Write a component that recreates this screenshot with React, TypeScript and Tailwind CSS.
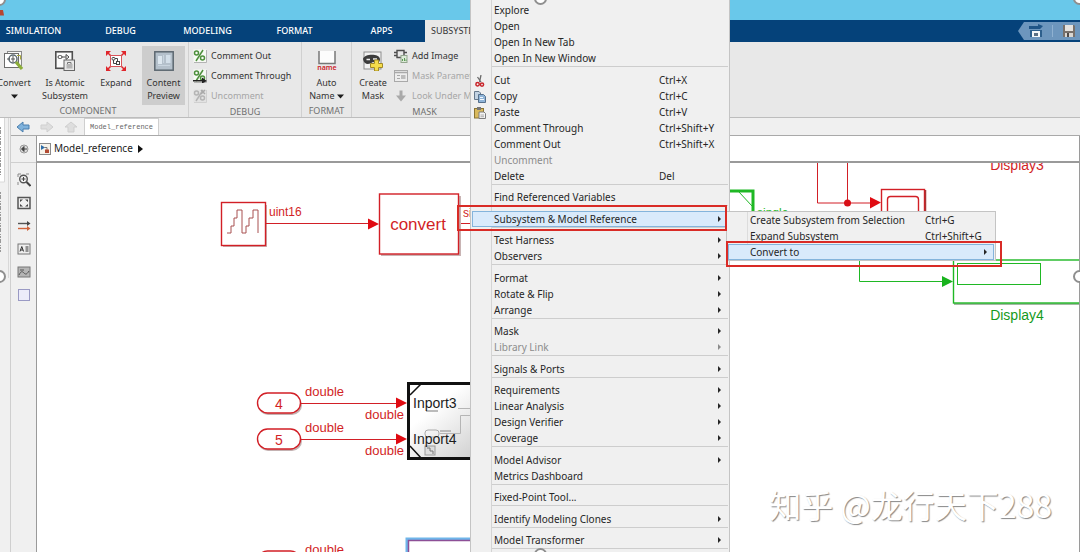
import React from 'react';
import { clsx } from 'clsx';

interface MenuEntry {
  label: string;
  shortcut?: string;
  submenu?: boolean;
  disabled?: boolean;
  active?: boolean;
  icon?: React.ReactNode;
}

const CutIcon = () => (
  <svg className="h-3 w-3" viewBox="0 0 12 12" fill="none">
    <path d="M7 0 5.5 7M3.5 2 7 7" stroke="#6b6b6b" strokeWidth="1.3" />
    <circle cx="3.6" cy="9.2" r="1.7" stroke="#c9252b" strokeWidth="1.5" />
    <circle cx="8" cy="9.6" r="1.6" stroke="#c9252b" strokeWidth="1.5" />
  </svg>
);

const CopyIcon = () => (
  <svg className="h-3 w-3" viewBox="0 0 12 12">
    <path d="M.5.5h4.5l1.5 1.500v6.500h-6z" fill="#c3d3e3" stroke="#66788c" />
    <path d="M4.500 3.500h5l2 2v6h-7z" fill="#8fb4d8" stroke="#56708c" />
    <path d="M6 6.500h3M6 8.500h4" stroke="#f2f7fc" />
  </svg>
);

const PasteIcon = () => (
  <svg className="h-3 w-3" viewBox="0 0 12 12">
    <rect x=".5" y="1.500" width="9" height="9.500" fill="#d9b95c" stroke="#8a7434" />
    <rect x="3" y="0" width="4" height="3" fill="#777" />
    <path d="M5 5h5l1.500 1.500v5h-6.500z" fill="#f4f4f4" stroke="#7d7d7d" />
    <path d="M6.500 8h3.500M6.500 9.700h3.500" stroke="#9a9a9a" strokeWidth=".8" />
  </svg>
);

const menuGroups: MenuEntry[][] = [
  [{ label: 'Explore' }, { label: 'Open' }, { label: 'Open In New Tab' }, { label: 'Open In New Window' }],
  [
    { label: 'Cut', shortcut: 'Ctrl+X', icon: <CutIcon /> },
    { label: 'Copy', shortcut: 'Ctrl+C', icon: <CopyIcon /> },
    { label: 'Paste', shortcut: 'Ctrl+V', icon: <PasteIcon /> },
    { label: 'Comment Through', shortcut: 'Ctrl+Shift+Y' },
    { label: 'Comment Out', shortcut: 'Ctrl+Shift+X' },
    { label: 'Uncomment', disabled: true },
    { label: 'Delete', shortcut: 'Del' },
  ],
  [{ label: 'Find Referenced Variables' }],
  [{ label: 'Subsystem & Model Reference', submenu: true, active: true }],
  [{ label: 'Test Harness', submenu: true }, { label: 'Observers', submenu: true }],
  [
    { label: 'Format', submenu: true },
    { label: 'Rotate & Flip', submenu: true },
    { label: 'Arrange', submenu: true },
  ],
  [{ label: 'Mask', submenu: true }, { label: 'Library Link', submenu: true, disabled: true }],
  [{ label: 'Signals & Ports', submenu: true }],
  [
    { label: 'Requirements', submenu: true },
    { label: 'Linear Analysis', submenu: true },
    { label: 'Design Verifier', submenu: true },
    { label: 'Coverage', submenu: true },
  ],
  [{ label: 'Model Advisor', submenu: true }, { label: 'Metrics Dashboard' }],
  [{ label: 'Fixed-Point Tool...' }],
  [{ label: 'Identify Modeling Clones', submenu: true }],
  [{ label: 'Model Transformer', submenu: true }],
];

const submenuEntries: MenuEntry[] = [
  { label: 'Create Subsystem from Selection', shortcut: 'Ctrl+G' },
  { label: 'Expand Subsystem', shortcut: 'Ctrl+Shift+G' },
  { label: 'Convert to', submenu: true, active: true },
];

const MenuRow = ({ entry }: { entry: MenuEntry }) => (
  <button
    type="button"
    role="menuitem"
    disabled={entry.disabled}
    className={clsx(
      'relative flex h-4 w-full items-center pl-[22px] pr-[7px] text-left text-[10px] leading-4 whitespace-nowrap',
      entry.disabled ? 'text-[#8c8c8c]' : 'text-[#262626]',
      entry.active && 'bg-[#d9eafb] outline outline-1 -outline-offset-1 outline-[#84b4dc]'
    )}
  >
    {entry.icon && <span className="absolute left-[2px] top-[3px]">{entry.icon}</span>}
    <span className="flex-1">{entry.label}</span>
    {entry.shortcut && <span className="w-[62px]">{entry.shortcut}</span>}
    {entry.submenu && (
      <svg className="h-[6px] w-[3px]" viewBox="0 0 3 6" fill="currentColor">
        <path d="M0 0 3 3 0 6z" />
      </svg>
    )}
  </button>
);

/* Right-click menu */
const ContextMenu = () => (
  <div role="menu" className="absolute -top-[2px] bottom-0 left-[470px] w-[260px] border-x border-[#c4c4c4] bg-[#f0f0f0]">
    <div className="absolute inset-y-0 left-5 w-px bg-[#d4d4d4]" />
    {menuGroups.map((group, i) => (
      <div key={i} className="relative px-px pt-[5px] first:pt-px even:pt-1">
        {group.map((entry) => (
          <MenuRow key={entry.label} entry={entry} />
        ))}
        <div className="ml-5 h-px bg-[#cdcdcd]" />
      </div>
    ))}
  </div>
);

const Submenu = () => (
  <div role="menu" className="absolute left-[726px] top-[211px] w-[270px] border border-[#c4c4c4] bg-[#f0f0f0] px-px">
    <div className="absolute inset-y-0 left-5 w-px bg-[#dcdcdc]" />
    {submenuEntries.map((entry) => (
      <MenuRow key={entry.label} entry={entry} />
    ))}
  </div>
);

/* Ribbon icons */
const ConvertIcon = () => (
  <svg className="h-5 w-5" viewBox="0 0 20 20" fill="none">
    <rect x="3.500" y=".5" width="14" height="14" fill="#f7f7f7" stroke="#8a8a8a" />
    <rect x=".5" y="2.500" width="14" height="14" fill="#fff" stroke="#6d6d6d" />
    <circle cx="9" cy="8" r="4" stroke="#5d6a72" strokeWidth="1.500" />
    <path d="M3 8h3M9 5v6M7 8h4" stroke="#555" />
    <path d="m12 11 6 7" stroke="#8cae3a" strokeWidth="3.200" />
    <path d="M13 4.500h3.500v4" stroke="#a6a63c" />
  </svg>
);

const AtomicIcon = () => (
  <svg className="h-5 w-5" viewBox="0 0 20 20" fill="none">
    <rect x=".8" y=".8" width="16.500" height="16.500" fill="#fbfbfb" stroke="#4f4f4f" strokeWidth="1.600" />
    <rect x="3" y="4.500" width="4" height="3" rx="1.500" stroke="#444" />
    <path d="M7 6h3.500M11 3.500 14 6l-3 2.500z" stroke="#444" />
    <rect x="9" y="9" width="10.500" height="10.500" fill="#e9e9e9" stroke="#666" />
    <rect x="11.500" y="13" width="6" height="4.500" fill="#b5b5b5" />
    <path d="M12.500 13v-1.500h3.500V13" stroke="#777" />
  </svg>
);

const ExpandIcon = () => (
  <svg className="h-5 w-5" viewBox="0 0 20 20" fill="none">
    <path d="M0 0h5L0 5zM20 0v5l-5-5zM0 20v-5l5 5zM20 20h-5l5-5z" fill="#e0262c" />
    <path d="m1 1 4 4M19 1l-4 4M1 19l4-4M19 19l-4-4" stroke="#e0262c" strokeWidth="1.500" />
    <rect x="4.500" y="4.500" width="11" height="11" fill="#fff" stroke="#d8545a" />
    <rect x="6" y="6.500" width="3" height="2.500" rx="1" stroke="#444" />
    <path d="M9 7.500h2.500v3M7.500 9v3.500h3" stroke="#444" />
    <rect x="10.500" y="10.500" width="3" height="3" stroke="#444" />
  </svg>
);

const PreviewIcon = () => (
  <svg className="h-5 w-5" viewBox="0 0 20 20" fill="none">
    <rect x=".8" y=".8" width="18.400" height="18.400" fill="#b4c0cb" stroke="#5c6770" strokeWidth="1.500" />
    <rect x="4" y="5" width="4" height="8" fill="#dde7ef" />
    <rect x="12" y="4" width="4.500" height="8" fill="#d3dfe9" />
    <path d="M4 14.500h12M9.500 4v8" stroke="#c9d5df" />
  </svg>
);

const NameIcon = () => (
  <svg className="h-5 w-5 overflow-visible" viewBox="0 0 20 20" fill="none">
    <rect x="2" y="0" width="16" height="12" fill="#fcfcfc" />
    <path d="M2 0v12.500h16V0" stroke="#777" strokeWidth="1.500" />
    <text x="10" y="19" textAnchor="middle" fill="#cc2229" fontSize="7" fontWeight="600">
      name
    </text>
  </svg>
);

const MaskIcon = () => (
  <svg className="h-5 w-5" viewBox="0 0 20 20" fill="none">
    <rect x="1" y="1" width="17" height="17" fill="#f2f2f2" stroke="#8d8d8d" />
    <path d="M0 8c1-5 16-6 17 0 0 4-3 5-7 3-4 3-9 3-10-3z" fill="#3c3c3c" />
    <path d="M3.500 8.500h3.500M10 8h4" stroke="#eee" strokeWidth="1.600" />
    <path d="M11.500 9h4v3.500h4v4h-4V20h-4v-3.500h-4v-4h4z" fill="#f6dd4b" stroke="#a28a26" />
  </svg>
);

const PercentIcon = ({ variant }: { variant: 'out' | 'through' | 'none' }) => (
  <svg className="h-[14px] w-[14px]" viewBox="0 0 14 14" fill="none">
    <rect x=".5" y=".5" width="13" height="13" fill={variant === 'none' ? '#e2e2e2' : '#f6faf3'} />
    <path d="M13.500 1v12.500H1" stroke={variant === 'none' ? '#d0d0d0' : '#b3b3b3'} />
    <g stroke={variant === 'none' ? '#b4b4b4' : '#4d8f3c'} strokeWidth="1.500">
      <circle cx="3.500" cy="4" r="2" />
      <circle cx="9.500" cy="9" r="2" />
      <path d="M10 1 3 12" />
    </g>
    {variant === 'through' && <path d="M0 11h9V8.500l5 3.500-5 2.500v-2H0z" fill="#222" />}
    {variant === 'none' && <path d="m8 1 4 4M12 1 8 5" stroke="#aaa" strokeWidth="1.500" />}
  </svg>
);

const AddImageIcon = () => (
  <svg className="h-[14px] w-[14px]" viewBox="0 0 14 14" fill="none">
    <path d="M3 1.500h7v7H3zM0 3.500h3M0 6.500h3M10 3.500h3" stroke="#4d4d4d" strokeWidth="1.400" />
    <rect x="7" y="6.500" width="6" height="7" fill="#dcebd8" stroke="#93a58e" />
    <path d="M8.500 12v-2M10.500 12V9M12 12v-1.500" stroke="#5d9a56" />
  </svg>
);

const ParamsIcon = () => (
  <svg className="h-[14px] w-[14px]" viewBox="0 0 14 14" fill="none">
    <rect x=".5" y="1.500" width="13" height="11" fill="#ededed" stroke="#a9a9a9" />
    <path d="M1 3.500h12" stroke="#a9a9a9" strokeWidth="1.500" />
    <path d="M3 6.500h3M3 9.500h3" stroke="#a9a9a9" />
    <rect x="7" y="6" width="4.500" height="4" fill="#bcbcbc" />
  </svg>
);

const LookUnderIcon = () => (
  <svg className="h-[14px] w-[14px]" viewBox="0 0 14 14">
    <path d="M5.500 1.500h3v5H12L7 12.500 2 6.500h3.500z" fill="#a9a9a9" />
  </svg>
);

const DownCaret = () => (
  <svg className="inline h-[5px] w-[7px]" viewBox="0 0 7 5">
    <path d="M0 .5h7L3.500 4.500z" fill="#1c1c1c" />
  </svg>
);

interface ToolButtonProps {
  icon: React.ReactNode;
  children: React.ReactNode;
  className?: string;
}

const ToolButton = ({ icon, children, className }: ToolButtonProps) => (
  <button
    type="button"
    className={clsx('flex h-[59px] flex-col items-center gap-[5px] pt-[5px] text-center leading-[13px] whitespace-nowrap', className)}
  >
    {icon}
    <span>{children}</span>
  </button>
);

const SmallButton = ({ icon, label, disabled }: { icon: React.ReactNode; label: string; disabled?: boolean }) => (
  <button
    type="button"
    disabled={disabled}
    className={clsx('flex h-5 items-center gap-1 whitespace-nowrap', disabled && 'text-[#a6a6a6]')}
  >
    {icon}
    {label}
  </button>
);

const RibbonGroup = ({ title, className, children }: { title: string; className?: string; children: React.ReactNode }) => (
  <section className={clsx('flex shrink-0 flex-col border-r border-[#d0d0d0] pt-1', className)}>
    <div className="flex flex-1">{children}</div>
    <h2 className="text-center text-[9px] leading-3 text-[#707070]">{title}</h2>
  </section>
);

const tabs = ['SIMULATION', 'DEBUG', 'MODELING', 'FORMAT', 'APPS'];

const SaveAllIcon = () => (
  <svg className="h-[14px] w-[14px]" viewBox="0 0 14 14">
    <path d="M0 2h9V0l5 2-3 3H0z" fill="#1f5486" />
    <path d="M1 6h12v7H1z" fill="#2d5f8c" />
    <rect x="3" y="7" width="8" height="6" fill="#f3f6f8" />
    <rect x="5" y="9" width="4" height="3" fill="#5a6f83" />
  </svg>
);

const SaveIcon = () => (
  <svg className="h-[14px] w-[14px]" viewBox="0 0 14 14">
    <path d="M1 1h11l1 1v11H1z" fill="#77706b" />
    <rect x="3" y="1" width="8" height="6" fill="#e6e3df" />
    <rect x="3" y="9" width="8" height="4" fill="#d9d6d2" />
    <rect x="5" y="9" width="2" height="4" fill="#4e4a48" />
  </svg>
);

const TabBar = () => (
  <nav className="-ml-[10px] flex h-[22px] shrink-0 bg-[#05427a] text-[9px] font-medium text-white">
    {tabs.map((tab) => (
      <button key={tab} type="button" className="w-[87px] shrink-0 text-center">
        {tab}
      </button>
    ))}
    <button type="button" className="w-[87px] bg-[#e8e8e8] pl-[6px] text-left font-normal text-[#333]">
      SUBSYSTEM
    </button>
    <div className="ml-auto flex w-[62px]">
      <svg className="h-[22px] w-[6px]" viewBox="0 0 6 22">
        <path d="M6 2v18L0 11z" fill="#6d96bd" />
      </svg>
      <div className="my-[2px] flex flex-1 items-center justify-around bg-[#6d96bd]">
        <button type="button" aria-label="Save all">
          <SaveAllIcon />
        </button>
        <span className="h-3 w-px bg-[#8fb1d1]" />
        <button type="button" aria-label="Save">
          <SaveIcon />
        </button>
      </div>
    </div>
  </nav>
);

const Ribbon = () => (
  <div className="flex h-[76px] shrink-0 border-b border-[#bdbdbd] bg-[#e8e8e8] text-[9px] text-[#333]">
    <RibbonGroup title="COMPONENT" className="-ml-3 w-[201px]">
      <ToolButton icon={<ConvertIcon />} className="w-[52px]">
        Convert
        <br />
        <DownCaret />
      </ToolButton>
      <ToolButton icon={<AtomicIcon />} className="w-[50px]">
        Is Atomic
        <br />
        Subsystem
      </ToolButton>
      <ToolButton icon={<ExpandIcon />} className="w-[52px]">
        Expand
      </ToolButton>
      <ToolButton icon={<PreviewIcon />} className="w-[43px] bg-[#cdcdcd]">
        Content
        <br />
        Preview
      </ToolButton>
    </RibbonGroup>
    <RibbonGroup title="DEBUG" className="w-[113px]">
      <div className="flex flex-col pl-1">
        <SmallButton icon={<PercentIcon variant="out" />} label="Comment Out" />
        <SmallButton icon={<PercentIcon variant="through" />} label="Comment Through" />
        <SmallButton icon={<PercentIcon variant="none" />} label="Uncomment" disabled />
      </div>
    </RibbonGroup>
    <RibbonGroup title="FORMAT" className="w-[50px]">
      <ToolButton icon={<NameIcon />} className="w-full">
        Auto
        <br />
        Name <DownCaret />
      </ToolButton>
    </RibbonGroup>
    <RibbonGroup title="MASK" className="w-[146px]">
      <ToolButton icon={<MaskIcon />} className="w-[42px]">
        Create
        <br />
        Mask
      </ToolButton>
      <div className="flex flex-col">
        <SmallButton icon={<AddImageIcon />} label="Add Image" />
        <SmallButton icon={<ParamsIcon />} label="Mask Parameters" disabled />
        <SmallButton icon={<LookUnderIcon />} label="Look Under Mask" disabled />
      </div>
    </RibbonGroup>
  </div>
);

const arrowPaths = [
  { name: 'Back', d: 'M1 6 7 1v3h6v4H7v3z', fill: '#7fb2dc', stroke: '#4a7fae' },
  { name: 'Forward', d: 'M13 6 7 1v3H1v4h6v3z', fill: '#dedede', stroke: '#cfcfcf' },
  { name: 'Up', d: 'M7 1 1 6h3v5h6V6h3z', fill: '#dedede', stroke: '#cfcfcf' },
];

const DocumentBar = () => (
  <div className="flex h-[18px] shrink-0 items-stretch border-b border-[#a9a9a9] bg-[#f0f0f0] pl-[5px]">
    <div className="flex items-center gap-[10px]">
      {arrowPaths.map((a) => (
        <button key={a.name} type="button" aria-label={a.name}>
          <svg className="h-3 w-[14px]" viewBox="0 0 14 12">
            <path d={a.d} fill={a.fill} stroke={a.stroke} />
          </svg>
        </button>
      ))}
    </div>
    <button
      type="button"
      className="ml-[6px] border-x border-t border-[#cfcfcf] bg-white px-[5px] font-[Liberation_Mono,monospace] text-[7px] text-[#666]"
    >
      Model_reference
    </button>
  </div>
);

/* Icons down the left side of the canvas */
const paletteIcons = [
  {
    name: 'Zoom',
    art: (
      <>
        <path d="M1 4V1h3M9 1h3M1 9v3" stroke="#888" />
        <circle cx="6.500" cy="6" r="3.800" stroke="#555" strokeWidth="1.400" />
        <path d="M4.500 6h4M6.500 4v4" stroke="#444" />
        <path d="m9.500 9 4 4" stroke="#444" strokeWidth="2" />
      </>
    ),
  },
  {
    name: 'Fit to view',
    art: (
      <>
        <rect x="1" y="1.500" width="12" height="11" stroke="#555" strokeWidth="1.500" />
        <path d="M3 6V3.500h3L3 6zM11 6V3.500H8l3 2.500zM3 8v2.500h3L3 8zM11 8v2.500H8L11 8z" fill="#444" />
      </>
    ),
  },
  {
    name: 'Signals',
    art: (
      <>
        <path d="M1 4.500h10" stroke="#555" strokeWidth="1.400" />
        <path d="M1 9.500h10" stroke="#d0643c" strokeWidth="1.400" />
        <path d="m10 2 3.500 2.500L10 7z" fill="#444" />
        <path d="m10 7 3.500 2.500L10 12z" fill="#d0643c" />
      </>
    ),
  },
  {
    name: 'Annotation',
    art: (
      <>
        <rect x="1" y="2" width="12" height="10" fill="#eee" stroke="#777" />
        <path d="m3 9.500 1.800-5 1.800 5M3.500 8h2.500M8.500 5h3M8.500 7h3M8.500 9h3" stroke="#333" />
      </>
    ),
  },
  {
    name: 'Image',
    art: (
      <>
        <rect x="1" y="2" width="12" height="10" fill="#b5b5b5" stroke="#777" />
        <path d="M2 10c2-4 3-4 5-2s3 1 5-2M3 5h4" stroke="#555" />
      </>
    ),
  },
  { name: 'Area', art: <rect x="1.500" y="1.500" width="11" height="11" fill="#ececfa" stroke="#9a9ac4" /> },
];

const Palette = () => (
  <aside className="flex w-[25px] shrink-0 flex-col items-center bg-[#f0f0f0]">
    <button type="button" aria-label="Hide browser" className="flex h-[26px] items-center">
      <svg className="h-[10px] w-[10px]" viewBox="0 0 10 10" fill="none">
        <circle cx="5" cy="5" r="4" fill="#ddd" stroke="#999" />
        <path d="M8 5H3M5 2.500 2.500 5 5 7.500z" fill="#444" stroke="#444" />
      </svg>
    </button>
    <div className="h-px w-full bg-[#cfcfcf]" />
    <div className="flex flex-col gap-[9px] pt-[10px]">
      {paletteIcons.map((p) => (
        <button key={p.name} type="button" aria-label={p.name}>
          <svg className="block h-[14px] w-[14px]" viewBox="0 0 14 14" fill="none">
            {p.art}
          </svg>
        </button>
      ))}
    </div>
  </aside>
);

const Breadcrumb = () => (
  <div className="flex h-[27px] shrink-0 items-center gap-[3px] border-b-2 border-[#9a9a9a] bg-white pl-[2px] text-[10px] text-[#222]">
    <svg className="h-3 w-3" viewBox="0 0 12 12" fill="none">
      <rect x=".5" y=".5" width="11" height="11" fill="#f7f3ea" stroke="#8a8a8a" />
      <path d="M2 2 6 4.500 2 7z" fill="#2c6ca8" />
      <path d="M5.500 4.500H8V7" stroke="#777" />
      <rect x="6" y="6.500" width="4" height="3.500" fill="#b34b34" />
    </svg>
    <a href="#">Model_reference</a>
    <svg className="ml-[2px] h-2 w-[5px]" viewBox="0 0 5 8">
      <path d="M0 0v8l5-4z" fill="#111" />
    </svg>
  </div>
);

const RED = '#d21f26';
const GREEN = '#1fb824';

const inports = [
  { n: '4', y: 403 },
  { n: '5', y: 439 },
  { n: '6', y: 561 },
];

/* Model canvas; coordinates are window based and shifted by the group */
const Diagram = () => (
  <svg className="block h-full w-full" fontFamily="Liberation Sans, Arial, sans-serif">
    <g transform="translate(-37 -163)" fill="none">
      {/* Repeating sequence -> convert */}
      <rect x="223" y="205" width="44" height="42" fill="#c9b4b4" />
      <rect x="221.500" y="202.500" width="44" height="43" fill="#fff" stroke={RED} strokeWidth="1.400" />
      <path d="M227 233h4v-7h3v-8h3v-8h5v23h4v-7h3v-8h4v-8h5v23" stroke="#a85050" />
      <path d="M266 223.500h104M459 223.500h12" stroke={RED} />
      <path d="M368 218.500 379 224l-11 5.500z" fill="#e00b12" />
      <rect x="381" y="196" width="80" height="60" fill="#c9b4b4" />
      <rect x="379.500" y="194" width="79" height="60" fill="#fff" stroke={RED} strokeWidth="1.400" />
      <g fill={RED}>
        <text x="269" y="216" fontSize="12">uint16</text>
        <text x="418" y="230" fontSize="17" textAnchor="middle">convert</text>
        <text x="463" y="217" fontSize="12">single</text>
      </g>

      {/* Inports */}
      {inports.map(({ n, y }) => (
        <g key={n}>
          <rect x="258" y={y - 8} width="44" height="20" rx="10" fill="#c4b2b2" />
          <rect x="257.500" y={y - 10} width="43" height="20" rx="10" fill="#fff" stroke={RED} strokeWidth="1.400" />
          <text x="279" y={y + 6} fontSize="14" textAnchor="middle" fill={RED}>{n}</text>
          <path d={`M301 ${y + 0.5}h96`} stroke={RED} />
          <path d={`M396 ${y - 5.5} 407 ${y}l-11 5.500z`} fill="#e00b12" />
          <text x="305" y={y - 7} fontSize="13" fill={RED}>double</text>
          <text x="365" y={y + 16} fontSize="13" fill={RED}>double</text>
        </g>
      ))}

      {/* Referenced model */}
      <defs>
        <linearGradient id="modelFill" x1="0" y1="0" x2="1" y2="1">
          <stop offset=".3" stopColor="#fff" />
          <stop offset="1" stopColor="#c4c4c4" />
        </linearGradient>
      </defs>
      <rect x="408.500" y="383.500" width="90" height="75" fill="url(#modelFill)" stroke="#111" strokeWidth="3" />
      <path d="M410 395 421 384M410 446l12 13" stroke="#111" strokeWidth="1.500" />
      <path d="M458 408.500h14M440 433.500h20.500v-18h12" stroke="#b5b5b5" />
      <rect x="425" y="430" width="14" height="7" rx="3" stroke="#aaa" />
      <path d="M426 411h12M440 431h11" stroke="#bbb" strokeWidth="2" />
      <rect x="425" y="446" width="10" height="9" fill="#ddd" stroke="#999" />
      <path d="M427 448h3v3h3v3" stroke="#777" />
      <g fill="#1c1c1c" fontSize="14">
        <text x="413" y="408">Inport3</text>
        <text x="413" y="444">Inport4</text>
      </g>
      <rect x="407" y="539" width="90" height="40" fill="#fff" stroke="#6fb5ea" strokeWidth="3" />
      <rect x="408.500" y="540.500" width="90" height="40" stroke="#8d4f96" strokeWidth="1.500" />

      {/* Right side, red */}
      <path d="M817.500 162v41h53M847.500 162v41" stroke={RED} />
      <circle cx="847.500" cy="203" r="3.500" fill="#d80f16" />
      <path d="m870 197 11 5.500-11 6z" fill="#e00b12" />
      <rect x="881.500" y="189.500" width="43" height="40" fill="#fff" stroke={RED} strokeWidth="1.400" />
      <path d="M925.500 190v30" stroke="#a33" strokeWidth="1.500" />
      <rect x="887.500" y="196.500" width="31" height="30" rx="3" stroke={RED} strokeWidth="1.400" />
      <text x="1017" y="170" fontSize="14" textAnchor="middle" fill={RED}>Display3</text>

      {/* Right side, green */}
      <path d="M720 191h33v30" stroke={GREEN} strokeWidth="3" />
      <path d="m739 192 13 14" stroke={GREEN} />
      <text x="757" y="217" fontSize="12" fill={GREEN}>single</text>
      <path d="M859.500 240v41.500H944" stroke={GREEN} />
      <path d="m942 276 11 5.500-11 5.500z" fill="#19b31e" />
      <path d="M954 304h140" stroke="#a3b8a3" strokeWidth="2" />
      <rect x="953.500" y="260" width="150" height="43" fill="#fff" stroke={GREEN} strokeWidth="1.400" />
      <rect x="957.500" y="263.500" width="83" height="21" stroke={GREEN} />
      <text x="1017" y="320" fontSize="14" textAnchor="middle" fill="#159a1c">Display4</text>
    </g>
  </svg>
);

/* Collapsed side panel with its rotated, cut-off labels */
const SideStrip = () => (
  <div className="w-[11px] shrink-0 border-r border-[#cfcfcf] bg-[#f0f0f0]">
    <svg className="block h-[160px] w-[9px]" viewBox="0 0 9 160" fill="none">
      <path d="M0 0h4v64H0z" fill="#fff" />
      <path d="M4.500 0v64H0M8.500 0v160" stroke="#d8d8d8" />
      <path d="M.5 9v48M.5 74v60" stroke="#999" strokeDasharray="2 1 4 2 1 1" />
    </svg>
  </div>
);

const Handle = ({ className }: { className: string }) => (
  <span className={clsx('absolute h-[13px] w-[13px] rounded-full border-2 border-[#8f8f8f] bg-white', className)} />
);

const App = () => {
  return (
    <div className="relative flex h-screen w-full flex-col overflow-hidden bg-white font-[Noto_Sans,Open_Sans,sans-serif]">
      <header className="flex h-5 shrink-0 items-start bg-[#69c8ea]">
        <svg className="h-4 w-4" viewBox="0 0 16 16">
          <path d="M0 10h3l1 5.500H0z" fill="#b7452f" />
        </svg>
      </header>
      <TabBar />
      <Ribbon />

      <main className="flex min-h-0 flex-1">
        <SideStrip />
        <div className="flex min-w-0 flex-1 flex-col">
          <DocumentBar />
          <div className="flex min-h-0 flex-1">
            <Palette />
            <div className="flex min-w-0 flex-1 flex-col border-x border-[#9a9a9a]">
              <Breadcrumb />
              <div className="min-h-0 flex-1">
                <Diagram />
              </div>
            </div>
          </div>
        </div>
      </main>

      <ContextMenu />
      <Submenu />

      {/* Red call-outs */}
      <div className="pointer-events-none absolute left-[457px] top-[205px] h-[26px] w-[270px] border-2 border-[#d92b26]" />
      <div className="pointer-events-none absolute left-[726px] top-[241px] h-[26px] w-[276px] border-2 border-[#d92b26]" />

      {/* Selection handles round the whole window */}
      <Handle className="-left-[7px] -top-[7px]" />
      <Handle className="left-[534px] -top-[8px]" />
      <Handle className="-right-[6px] -top-[8px]" />
      <Handle className="-left-[7px] top-[270px]" />
      <Handle className="-right-[6px] top-[270px]" />
      <Handle className="-bottom-[9px] left-[534px]" />

      <p className="absolute bottom-[22px] right-7 font-[Noto_Sans_CJK_SC,sans-serif] text-[32px] leading-[52px] text-white [text-shadow:1px_1px_1px_#888]">
        知乎 @龙行天下288
      </p>
    </div>
  );
};

export default App;
